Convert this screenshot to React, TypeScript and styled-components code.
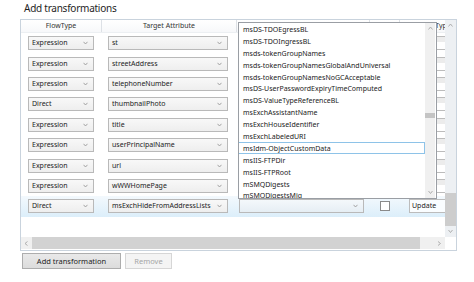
import React from "react";
import styled, { createGlobalStyle } from "styled-components";

const GlobalStyle = createGlobalStyle`
  html, body {
    margin: 0;
    padding: 0;
    background: #ffffff;
    font-family: "Noto Sans", "Open Sans", sans-serif;
    color: #222;
  }
`;

const Page = styled.div`
  width: 474px;
  height: 282px;
  overflow: hidden;
  padding-left: 20px;
  box-sizing: border-box;
`;

const Title = styled.div`
  height: 19px;
  padding-left: 4px;
  font-size: 10px;
  letter-spacing: -0.25px;
  line-height: 17px;
  color: #1e1e1e;
`;

const Frame = styled.div`
  position: relative;
  width: 437px;
  height: 232px;
  box-sizing: border-box;
  border: 1px solid #c9d3dd;
  display: flex;
  flex-direction: column;
`;

const Body = styled.div`
  display: flex;
  height: 217px;
`;

const Viewport = styled.div`
  width: 424px;
  overflow: hidden;
  display: flex;
  flex-direction: column;
`;

const HeaderRow = styled.div`
  display: flex;
  height: 13px;
  flex-shrink: 0;
  border-bottom: 1px solid #eceff2;
  box-sizing: border-box;
  background: linear-gradient(#ffffff, #f7f8fa);
`;

const HeaderCell = styled.div<{ $w: number; $pad?: number }>`
  width: ${({ $w }) => $w}px;
  flex-shrink: 0;
  box-sizing: border-box;
  border-right: 1px solid #dde1e6;
  font-size: 7px;
  line-height: 12px;
  text-align: ${({ $pad }) => ($pad ? "left" : "center")};
  padding-left: ${({ $pad }) => $pad ?? 0}px;
  color: #333;
  white-space: nowrap;
`;

const Row = styled.div<{ $selected?: boolean }>`
  display: flex;
  align-items: center;
  height: 20.4px;
  flex-shrink: 0;
  background: ${({ $selected }) =>
    $selected ? "linear-gradient(#f3f9fd, #dceefa)" : "transparent"};
`;

const Cell = styled.div<{ $w: number; $pad: number }>`
  width: ${({ $w }) => $w}px;
  flex-shrink: 0;
  padding-left: ${({ $pad }) => $pad}px;
  box-sizing: border-box;
  display: flex;
  align-items: center;
`;

const Combo = styled.div<{ $w: number; $tint?: boolean }>`
  position: relative;
  width: ${({ $w }) => $w}px;
  height: 14px;
  box-sizing: border-box;
  border: 1px solid #b9b9b9;
  background: ${({ $tint }) =>
    $tint ? "linear-gradient(#f4f8fb, #e6eef4)" : "linear-gradient(#f8f8f8, #eeeeee)"};
  font-size: 7px;
  line-height: 12px;
  padding-left: 3px;
  color: #222;
  white-space: nowrap;
  overflow: hidden;
`;

const ComboArrow = styled.svg`
  position: absolute;
  right: 5px;
  top: 4px;
  width: 5px;
  height: 4px;
`;

const TextBox = styled.div<{ $w: number }>`
  width: ${({ $w }) => $w}px;
  height: 14px;
  box-sizing: border-box;
  border: 1px solid #bcbcbc;
  background: linear-gradient(#ececec 45%, #ffffff 45%);
  font-size: 7px;
  line-height: 12px;
  padding-left: 2px;
  white-space: nowrap;
`;

const UpdateBox = styled(TextBox)`
  background: #fafdff;
`;

const CheckBox = styled.div`
  width: 10px;
  height: 10px;
  box-sizing: border-box;
  border: 1px solid #8a8a8a;
  background: #fff;
`;

const VScroll = styled.div`
  width: 11px;
  display: flex;
  flex-direction: column;
  align-items: center;
  background: #edf0f3;
`;

const ScrollArrowBox = styled.div<{ $h: number; $w?: number }>`
  height: ${({ $h }) => $h}px;
  width: ${({ $w }) => ($w ? `${$w}px` : "100%")};
  display: flex;
  align-items: center;
  justify-content: center;
  flex-shrink: 0;
`;

const Track = styled.div`
  flex: 1;
  width: 100%;
  display: flex;
  flex-direction: column;
`;

const VThumb = styled.div<{ $top: number; $h: number; $color: string }>`
  margin-top: ${({ $top }) => $top}px;
  height: ${({ $h }) => $h}px;
  width: 100%;
  background: ${({ $color }) => $color};
`;

const HScrollRow = styled.div`
  display: flex;
  height: 12px;
`;

const HScroll = styled.div`
  width: 424px;
  display: flex;
  align-items: stretch;
  background: #f0f0f0;
`;

const HThumb = styled.div`
  width: 388px;
  background: #d2d2d2;
`;

const HSpacer = styled.div`
  flex: 1;
`;

const Corner = styled.div`
  flex: 1;
  background: #ffffff;
`;

const DropList = styled.div`
  position: absolute;
  left: 217px;
  top: 2px;
  width: 199px;
  height: 177px;
  box-sizing: border-box;
  border: 1px solid #9a9ea4;
  background: #fff;
  display: flex;
  overflow: hidden;
  z-index: 2;
`;

const ListItems = styled.div`
  width: 186px;
  overflow: hidden;
`;

const ListItem = styled.div<{ $focused?: boolean }>`
  height: 11.9px;
  box-sizing: border-box;
  padding-left: 4px;
  font-size: 7px;
  line-height: 11px;
  color: #222;
  white-space: nowrap;
  border: 1px solid ${({ $focused }) => ($focused ? "#8ec3e8" : "transparent")};
  border-left: none;
`;

const ListScroll = styled.div`
  width: 10px;
  display: flex;
  flex-direction: column;
  background: #f0f0f0;
`;

const Buttons = styled.div`
  display: flex;
  gap: 4px;
  margin-top: 2px;
  margin-left: 2px;
`;

const Button = styled.button<{ $w: number }>`
  width: ${({ $w }) => $w}px;
  height: 16px;
  padding: 0;
  box-sizing: border-box;
  font-family: inherit;
  font-size: 7.5px;
  color: #222;
  border: 1px solid #adadad;
  background: linear-gradient(#e9e9e9, #dcdcdc);
  &:disabled {
    color: #a6a6a6;
    border-color: #d6d6d6;
    background: #f4f4f4;
  }
`;

const Chevron = ({ dir, color = "#a8a8a8" }: { dir: "up" | "down" | "left" | "right"; color?: string }) => {
  const pts: Record<string, string> = {
    up: "0.5,3.5 2.5,1 4.5,3.5",
    down: "0.5,1 2.5,3.5 4.5,1",
    left: "3.5,0.5 1,2.5 3.5,4.5",
    right: "1,0.5 3.5,2.5 1,4.5",
  };
  return (
    <svg width="5" height="5" viewBox="0 0 5 5">
      <polyline points={pts[dir]} fill="none" stroke={color} strokeWidth="0.9" />
    </svg>
  );
};

const cols = [81, 135, 133, 30, 75];

type RowData = { flow: string; target: string };

const rows: RowData[] = [
  { flow: "Expression", target: "st" },
  { flow: "Expression", target: "streetAddress" },
  { flow: "Expression", target: "telephoneNumber" },
  { flow: "Direct", target: "thumbnailPhoto" },
  { flow: "Expression", target: "title" },
  { flow: "Expression", target: "userPrincipalName" },
  { flow: "Expression", target: "url" },
  { flow: "Expression", target: "wWWHomePage" },
];

const listItems = [
  "msDS-TDOEgressBL",
  "msDS-TDOIngressBL",
  "msds-tokenGroupNames",
  "msds-tokenGroupNamesGlobalAndUniversal",
  "msds-tokenGroupNamesNoGCAcceptable",
  "msDS-UserPasswordExpiryTimeComputed",
  "msDS-ValueTypeReferenceBL",
  "msExchAssistantName",
  "msExchHouseIdentifier",
  "msExchLabeledURI",
  "msIdm-ObjectCustomData",
  "msIIS-FTPDir",
  "msIIS-FTPRoot",
  "mSMQDigests",
  "mSMQDigestsMig",
];

const Select = ({ w, value, tint }: { w: number; value: string; tint?: boolean }) => (
  <Combo $w={w} $tint={tint}>
    {value}
    <ComboArrow viewBox="0 0 5 4">
      <polyline points="0.5,0.8 2.5,3 4.5,0.8" fill="none" stroke="#9a9a9a" strokeWidth="0.9" />
    </ComboArrow>
  </Combo>
);

export default function App() {
  return (
    <>
      <GlobalStyle />
      <Page>
        <Title>Add transformations</Title>
        <Frame>
          <Body>
            <Viewport>
              <HeaderRow>
                <HeaderCell $w={cols[0]}>FlowType</HeaderCell>
                <HeaderCell $w={cols[1]}>Target Attribute</HeaderCell>
                <HeaderCell $w={cols[2]} />
                <HeaderCell $w={cols[3]} />
                <HeaderCell $w={cols[4]} $pad={12}>
                  Merge Type
                </HeaderCell>
              </HeaderRow>
              {rows.map((r, i) => (
                <Row key={i}>
                  <Cell $w={cols[0]} $pad={7}>
                    <Select w={66} value={r.flow} />
                  </Cell>
                  <Cell $w={cols[1]} $pad={6}>
                    <Select w={120} value={r.target} />
                  </Cell>
                  <Cell $w={cols[2]} $pad={2}>
                    <Select w={125} value="" />
                  </Cell>
                  <Cell $w={cols[3]} $pad={10}>
                    <CheckBox />
                  </Cell>
                  <Cell $w={cols[4]} $pad={9}>
                    <TextBox $w={52}>Update</TextBox>
                  </Cell>
                </Row>
              ))}
              <Row $selected>
                <Cell $w={cols[0]} $pad={7}>
                  <Select w={66} value="Direct" />
                </Cell>
                <Cell $w={cols[1]} $pad={6}>
                  <Select w={120} value="msExchHideFromAddressLists" />
                </Cell>
                <Cell $w={cols[2]} $pad={2}>
                  <Select w={125} value="" tint />
                </Cell>
                <Cell $w={cols[3]} $pad={10}>
                  <CheckBox />
                </Cell>
                <Cell $w={cols[4]} $pad={9}>
                  <UpdateBox $w={52}>Update</UpdateBox>
                </Cell>
              </Row>
            </Viewport>
            <VScroll>
              <ScrollArrowBox $h={11}>
                <Chevron dir="up" />
              </ScrollArrowBox>
              <Track>
                <VThumb $top={162} $h={33} $color="#cdcdcd" />
              </Track>
              <ScrollArrowBox $h={11}>
                <Chevron dir="down" />
              </ScrollArrowBox>
            </VScroll>
          </Body>
          <HScrollRow>
            <HScroll>
              <ScrollArrowBox $h={12} $w={11}>
                <Chevron dir="left" />
              </ScrollArrowBox>
              <HThumb />
              <HSpacer />
              <ScrollArrowBox $h={12} $w={11}>
                <Chevron dir="right" />
              </ScrollArrowBox>
            </HScroll>
            <Corner />
          </HScrollRow>
          <DropList>
            <ListItems>
              {listItems.map((t, i) => (
                <ListItem key={t} $focused={i === 10}>
                  {t}
                </ListItem>
              ))}
            </ListItems>
            <ListScroll>
              <ScrollArrowBox $h={11}>
                <Chevron dir="up" />
              </ScrollArrowBox>
              <Track>
                <VThumb $top={79} $h={5} $color="#c4c4c4" />
              </Track>
              <ScrollArrowBox $h={11}>
                <Chevron dir="down" />
              </ScrollArrowBox>
            </ListScroll>
          </DropList>
        </Frame>
        <Buttons>
          <Button $w={99}>Add transformation</Button>
          <Button $w={47} disabled>
            Remove
          </Button>
        </Buttons>
      </Page>
    </>
  );
}
